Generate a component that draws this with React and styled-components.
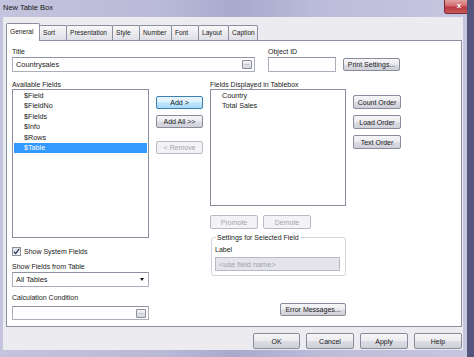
import React from 'react';
import styled, { createGlobalStyle, css } from 'styled-components';

const GlobalStyle = createGlobalStyle`
  html, body {
    margin: 0;
    padding: 0;
    background: #ffffff;
  }
  body {
    font-family: "Liberation Sans", Arial, sans-serif;
    font-size: 7px;
    color: #1a1a1a;
  }
  * { box-sizing: border-box; }
`

const Window = styled.div`
  width: 474px;
  height: 357px;
  display: flex;
  flex-direction: column;
  background: linear-gradient(90deg, #c4c4de 0%, #b9b9d8 35%, #a9a9cd 50%, #bdbddb 70%, #c6c6e0 100%);
  border-right: 7px solid #54567e;
  overflow: hidden;
`

const TitleBar = styled.div`
  height: 17px;
  display: flex;
  align-items: flex-start;
  justify-content: space-between;
  padding-left: 3px;
`

const TitleText = styled.span`
  font-size: 7.5px;
  line-height: 16px;
  color: #141414;
`

const CloseButton = styled.div`
  width: 30px;
  height: 14px;
  margin-right: -7px;
  border: 1px solid #7a2a30;
  border-top: none;
  border-radius: 0 0 3px 3px;
  background: linear-gradient(180deg, #e2a0a0 0%, #d06a6c 45%, #b93a40 55%, #c85a5c 100%);
  color: #ffffff;
  font-weight: bold;
  font-size: 8px;
  line-height: 12px;
  text-align: center;
`

const Client = styled.div`
  flex: 1;
  display: flex;
  flex-direction: column;
  margin: 0 4px 7px 3px;
  padding: 6px 1px 0 3px;
  background: #ebebf0;
`

const TabRow = styled.div`
  height: 17px;
  display: flex;
  align-items: flex-end;
  padding-left: 1px;
`

const Tab = styled.div`
  width: ${({ w }) => w}px;
  height: 15px;
  margin-left: -1px;
  padding-left: 3px;
  border: 1px solid #8c8ea0;
  border-bottom: none;
  border-radius: 2px 2px 0 0;
  background: linear-gradient(180deg, #f8f8fa 0%, #ececf0 50%, #dedee6 100%);
  font-size: 6.6px;
  line-height: 13px;
  color: #202020;
  white-space: nowrap;
  overflow: hidden;
  ${({ active }) => active && css`
    height: 18px;
    margin-bottom: -1px;
    position: relative;
    z-index: 1;
    background: #ffffff;
    line-height: 15px;
  `}
`

const Panel = styled.div`
  height: 287px;
  background: #ffffff;
  border: 1px solid #8c8ea0;
  padding: 6px 5px 0 5px;
`

const TopRow = styled.div`
  display: flex;
  align-items: flex-end;
`

const Group = styled.div`
  display: flex;
  flex-direction: column;
  width: ${({ w }) => w}px;
  margin-left: ${({ ml }) => ml || 0}px;
`

const Label = styled.div`
  height: 9px;
  line-height: 9px;
  margin-top: ${({ mt }) => mt || 0}px;
  white-space: nowrap;
`

const Field = styled.div`
  height: ${({ h }) => h || 15}px;
  margin-top: ${({ mt }) => mt || 0}px;
  border: 1px solid #abaebb;
  border-top-color: #8f92a2;
  background: #ffffff;
  display: flex;
  align-items: center;
  justify-content: space-between;
  padding: 0 2px 0 3px;
  font-size: 7.4px;
  ${({ disabled }) => disabled && css`
    background: #e4e4ea;
    color: #a2a2ac;
    border-color: #b8b9c6;
  `}
`

const DotsButton = styled.div`
  width: 10px;
  height: 9px;
  margin-left: auto;
  border: 1px solid #8a8c9c;
  border-radius: 1px;
  background: linear-gradient(180deg, #f6f6f8, #d6d6de);
  font-size: 6px;
  line-height: 5px;
  text-align: center;
  color: #333;
`

const Button = styled.div`
  width: ${({ w }) => w || 47}px;
  height: ${({ h }) => h || 13}px;
  margin-top: ${({ mt }) => mt || 0}px;
  flex-shrink: 0;
  border: 1px solid #8a8c9c;
  border-radius: 2px;
  background: linear-gradient(180deg, #f6f6f8 0%, #ececf0 48%, #dcdce3 52%, #d0d0d9 100%);
  display: flex;
  align-items: center;
  justify-content: center;
  color: #1a1a1a;
  white-space: nowrap;
  ${({ primary }) => primary && css`
    border-color: #3c7fb1;
    background: linear-gradient(180deg, #eaf6fd 0%, #d9f0fc 48%, #bee6fd 52%, #a7d9f5 100%);
  `}
  ${({ disabled }) => disabled && css`
    border-color: #b9bac6;
    background: #f3f3f5;
    color: #a4a4ae;
  `}
`

const Columns = styled.div`
  display: flex;
  gap: 7px;
  margin-top: 8px;
`

const Column = styled.div`
  width: ${({ w }) => w}px;
  display: flex;
  flex-direction: column;
`

const ListBox = styled.div`
  height: ${({ h }) => h}px;
  border: 1px solid #8c8ea0;
  background: #ffffff;
  padding: 1px;
`

const ListItem = styled.div`
  height: 10.4px;
  line-height: 10.4px;
  padding-left: 10px;
  font-size: 7.2px;
  ${({ selected }) => selected && css`
    background: #3399ff;
    color: #ffffff;
  `}
`

const CheckRow = styled.div`
  display: flex;
  align-items: center;
  gap: 3px;
  height: 10px;
  margin-top: 8px;
`

const CheckBox = styled.div`
  width: 9px;
  height: 9px;
  border: 1px solid #8e8f9c;
  background: linear-gradient(135deg, #e2e2e8, #fafafa);
  display: flex;
  align-items: center;
  justify-content: center;
`

const Arrow = styled.div`
  width: 0;
  height: 0;
  margin-right: 2px;
  border-left: 2.5px solid transparent;
  border-right: 2.5px solid transparent;
  border-top: 3px solid #111;
`

const ButtonPair = styled.div`
  display: flex;
  gap: 5px;
  margin-top: 9px;
`

const GroupBox = styled.fieldset`
  margin: 4px 0 0 1px;
  padding: 0 5px 4px 3px;
  border: 1px solid #d2d3dc;
  border-radius: 3px;
  display: flex;
  flex-direction: column;
`

const Legend = styled.legend`
  padding: 0 1px;
  margin-left: 1px;
  font-size: 7px;
  line-height: 9px;
`

const Footer = styled.div`
  display: flex;
  justify-content: flex-end;
  gap: 6px;
  padding: 6px 0 0 0;
`

const tabs = [
  { name: 'General', w: 34 },
  { name: 'Sort', w: 28 },
  { name: 'Presentation', w: 47 },
  { name: 'Style', w: 28 },
  { name: 'Number', w: 33 },
  { name: 'Font', w: 28 },
  { name: 'Layout', w: 31 },
  { name: 'Caption', w: 30 },
];

const available = ['$Field', '$FieldNo', '$Fields', '$Info', '$Rows', '$Table'];

export default function App() {
  return (
    <>
      <GlobalStyle />
      <Window>
        <TitleBar>
          <TitleText>New Table Box</TitleText>
          <CloseButton>x</CloseButton>
        </TitleBar>
        <Client>
          <TabRow>
            {tabs.map((t, i) => (
              <Tab key={t.name} w={t.w} active={i === 0}>{t.name}</Tab>
            ))}
          </TabRow>
          <Panel>
            <TopRow>
              <Group w={243}>
                <Label>Title</Label>
                <Field mt={1}>
                  <span>Countrysales</span>
                  <DotsButton>...</DotsButton>
                </Field>
              </Group>
              <Group w={68} ml={13}>
                <Label>Object ID</Label>
                <Field mt={1} />
              </Group>
              <Group w={57} ml={7}>
                <Button w={57} style={{ marginBottom: 1 }}>Print Settings...</Button>
              </Group>
            </TopRow>

            <Columns>
              <Column w={137}>
                <Label>Available Fields</Label>
                <ListBox h={149}>
                  {available.map((f) => (
                    <ListItem key={f} selected={f === '$Table'}>{f}</ListItem>
                  ))}
                </ListBox>
                <CheckRow>
                  <CheckBox>
                    <svg width="7" height="7" viewBox="0 0 7 7">
                      <path d="M0.8 3.6 L2.7 5.6 L6.2 0.9" fill="none" stroke="#1f2f5a" strokeWidth="1.3" />
                    </svg>
                  </CheckBox>
                  <span>Show System Fields</span>
                </CheckRow>
                <Label mt={6}>Show Fields from Table</Label>
                <Field mt={1}>
                  <span>All Tables</span>
                  <Arrow />
                </Field>
                <Label mt={6}>Calculation Condition</Label>
                <Field mt={4} h={14}>
                  <DotsButton>...</DotsButton>
                </Field>
              </Column>

              <Column w={47}>
                <Button primary mt={16}>Add &gt;</Button>
                <Button mt={6}>Add All &gt;&gt;</Button>
                <Button disabled mt={13}>&lt; Remove</Button>
              </Column>

              <Column w={136}>
                <Label>Fields Displayed in Tablebox</Label>
                <ListBox h={117}>
                  <ListItem>Country</ListItem>
                  <ListItem>Total Sales</ListItem>
                </ListBox>
                <ButtonPair>
                  <Button disabled w={48} h={14}>Promote</Button>
                  <Button disabled w={48} h={14}>Demote</Button>
                </ButtonPair>
                <GroupBox>
                  <Legend>Settings for Selected Field</Legend>
                  <Label mt={3}>Label</Label>
                  <Field disabled mt={3} h={14}>
                    <span>&lt;use field name&gt;</span>
                  </Field>
                </GroupBox>
                <Button w={66} mt={27} style={{ alignSelf: 'flex-end' }}>Error Messages...</Button>
              </Column>

              <Column w={48}>
                <Button w={48} h={14} mt={15}>Count Order</Button>
                <Button w={48} h={14} mt={6}>Load Order</Button>
                <Button w={48} h={14} mt={6}>Text Order</Button>
              </Column>
            </Columns>
          </Panel>
          <Footer>
            <Button w={47} h={16}>OK</Button>
            <Button w={48} h={16}>Cancel</Button>
            <Button w={48} h={16}>Apply</Button>
            <Button w={48} h={16}>Help</Button>
          </Footer>
        </Client>
      </Window>
    </>
  );
}
